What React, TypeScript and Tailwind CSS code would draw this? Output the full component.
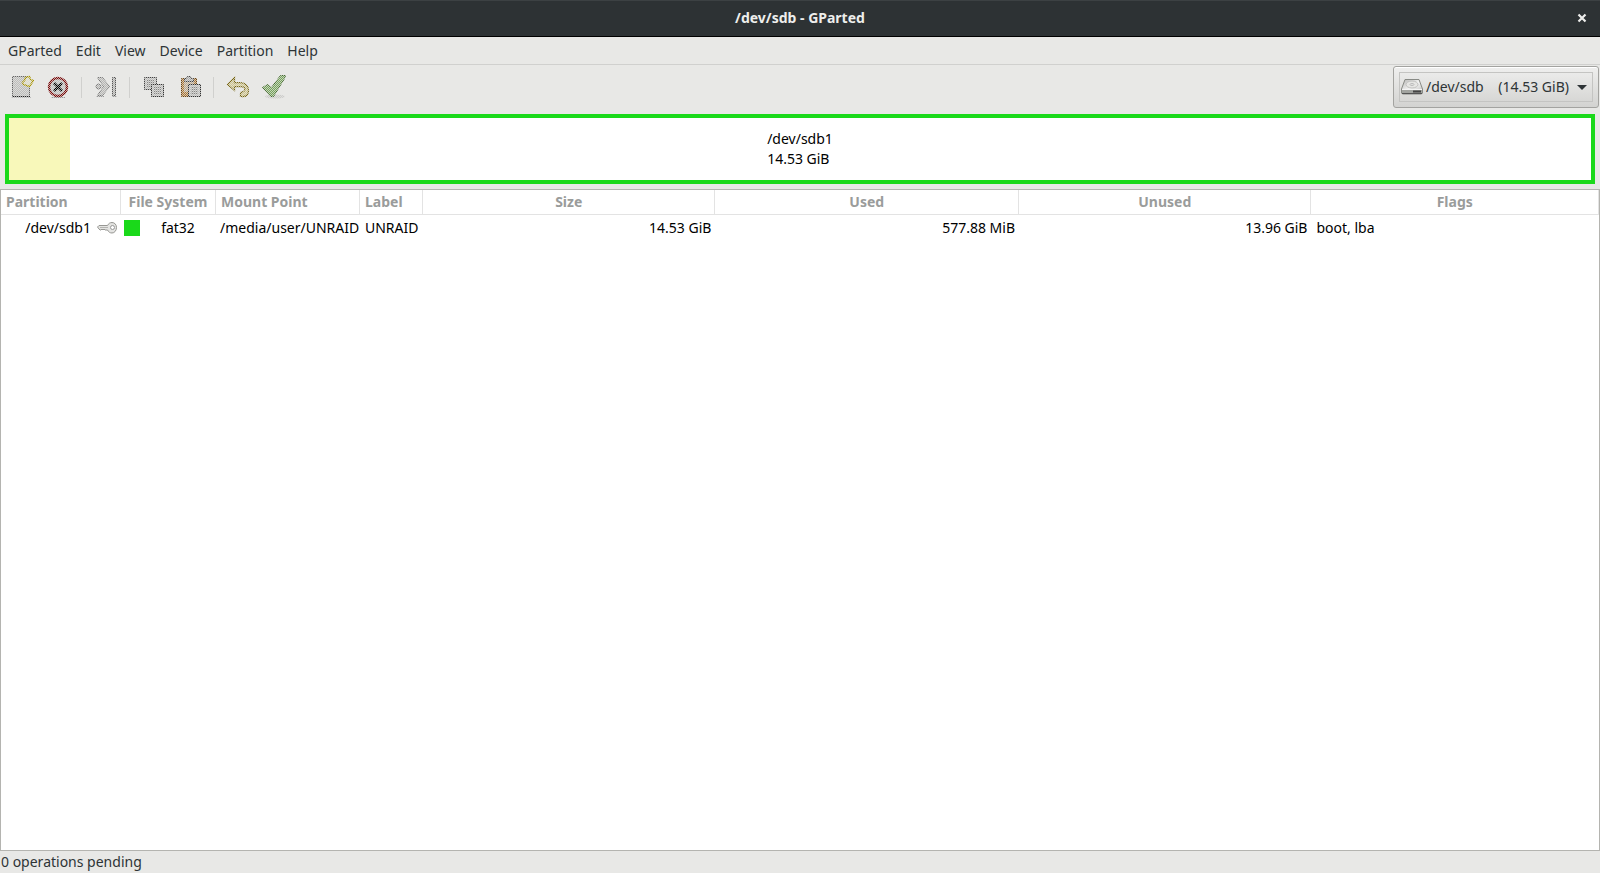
import type { ReactNode } from "react";

const menus = ["GParted", "Edit", "View", "Device", "Partition", "Help"];

const headClass = "h-[25px] border-r border-b border-[#e3e3e3] px-[5px] text-center font-bold whitespace-nowrap";

function StippledIcon({ children }: { children: ReactNode }) {
  return (
    <svg width="24" height="24" viewBox="0 0 24 24" fill="none" aria-hidden="true">
      <g mask="url(#stipple)">{children}</g>
    </svg>
  );
}

function StippleDefs() {
  return (
    <svg className="absolute" width="0" height="0" aria-hidden="true">
      <defs>
        <pattern id="checker" width="2" height="2" patternUnits="userSpaceOnUse">
          <path d="M0 0h2v2H0z" fill="#484848" />
          <path d="M0 0h1v1H0zM1 1h1v1H1z" fill="#fff" shapeRendering="crispEdges" />
        </pattern>
        <mask id="stipple" maskUnits="userSpaceOnUse" x="0" y="0" width="24" height="24">
          <rect width="24" height="24" fill="url(#checker)" />
        </mask>
      </defs>
    </svg>
  );
}

function ToolButton({ label, children }: { label: string; children: ReactNode }) {
  return (
    <button type="button" aria-label={label} className="flex h-9 w-9 items-center justify-center">
      <StippledIcon>{children}</StippledIcon>
    </button>
  );
}

function Separator() {
  return <div className="mr-1.5 ml-[5px] h-[21px] w-px bg-[#d0d0ce]" />;
}

function NewIcon() {
  return (
    <>
      <path d="M2.5 1.5h17v20h-17z" fill="#bcbcba" stroke="#666" />
      <path d="M2 21h18v1H2z" fill="#222" />
      <path d="M1 22.5h20" stroke="#bbb" />
      <path d="M15.5 2.5l4-1 1 3 3 1-2 3-2 3-3-1-3-1-1-2 2-2z" fill="#dedcc8" stroke="#a89400" strokeWidth="1.5" />
    </>
  );
}

function StopIcon() {
  return (
    <>
      <path d="M5 22.5h14" stroke="#999" />
      <circle cx="12" cy="12" r="9" fill="#c0c0be" stroke="#780808" strokeWidth="2.5" />
      <path d="M8 8l8 8M16 8l-8 8" stroke="#000" strokeWidth="2.8" />
    </>
  );
}

function ResizeIcon() {
  return (
    <>
      <circle cx="4.5" cy="11.5" r="2.5" fill="#b4b4b2" stroke="#777" />
      <path d="M3.5 2.5h5l7 9-7 9h-5l6-9z" fill="#b8b8b6" stroke="#777" />
      <path d="M18.5 2.5h3v18h-3z" fill="#b0b0ae" stroke="#555" />
      <path d="M2 21.5h8M18 21.5h5" stroke="#999" />
    </>
  );
}

function CopyIcon() {
  return (
    <>
      <path d="M2.5 2.5h12v12h-12z" fill="#bcbcba" stroke="#444" />
      <path d="M5 5.5h7M5 7.5h7M5 9.5h7M5 11.5h7" stroke="#858583" />
      <path d="M9.5 9.5h12v12h-12z" fill="#bcbcba" stroke="#333" />
      <path d="M12 12.5h7M12 14.5h7M12 16.5h7M12 18.5h7" stroke="#858583" />
    </>
  );
}

function PasteIcon() {
  return (
    <>
      <path d="M3.5 3.5h15v18h-15z" fill="#ab7634" stroke="#6e4410" />
      <path d="M6 5h10v12H6z" fill="#baa78c" />
      <path d="M6.5 6.5v-3h2l1-2h3l1 2h2v3z" fill="#aaa" stroke="#444" />
      <path d="M10.5 9.5h12v12h-12z" fill="#bcbcba" stroke="#333" />
      <path d="M13 12.5h7M13 14.5h7M13 16.5h7M13 18.5h7" stroke="#858583" />
    </>
  );
}

function UndoIcon() {
  return (
    <path
      d="M8.5 2.5l-7 7 7 6v-4h6c4 0 5 2 4 4-1 2-4 1-4 3v3c7 1 8-3 8-6 0-4-3-8-8-8h-6z"
      fill="#d0c68e"
      stroke="#7a6814"
      strokeWidth="1.25"
    />
  );
}

function ApplyIcon() {
  return (
    <>
      <ellipse cx="13" cy="21.5" rx="10" ry="2" fill="#ccccca" />
      <path d="M0.5 12.5l5-3 4 3 9-12h5l-1 3-11 18H9z" fill="#76a45a" stroke="#44692f" />
    </>
  );
}

function DriveIcon() {
  return (
    <svg width="22" height="18" viewBox="0 0 22 18" fill="none" aria-hidden="true">
      <defs>
        <linearGradient id="drive-top" x1="0" y1="0" x2="1" y2="1">
          <stop offset="0" stopColor="#b4b4b2" />
          <stop offset="0.5" stopColor="#f4f4f4" />
          <stop offset="1" stopColor="#b8b8b6" />
        </linearGradient>
      </defs>
      <path d="M4 1.5h14l3.5 9.5v4l-1 1h-19l-1-1v-4z" fill="url(#drive-top)" stroke="#888a85" />
      <ellipse cx="11" cy="6.5" rx="6" ry="3.5" fill="#e6e6e4" stroke="#c0c0be" />
      <ellipse cx="11" cy="6.5" rx="2" ry="1" stroke="#bbb" />
      <path d="M1 12h20v3H1z" fill="#a2a4a0" />
      <path d="M1 11.5h20" stroke="#f4f4f4" />
      <path d="M12 13.5h8" stroke="#444" strokeWidth="2" />
      <path d="M1 15.5h20" stroke="#555" />
    </svg>
  );
}

function KeyIcon() {
  return (
    <svg width="20" height="12" viewBox="0 0 20 12" fill="none" aria-hidden="true">
      <path
        d="M0.5 5l1.5-1.5h8.5c1-2 2.5-3 4.5-3 2.5 0 4.5 2 4.5 5s-2 5.5-4.5 5.5c-2 0-3.5-1-4.5-3H8l-1-1-1 1-1-1-1 1H3L2 7z"
        fill="#e4e4e2"
        stroke="#979793"
      />
      <path d="M3 5.5h8" stroke="#b5b5b2" />
      <circle cx="15.5" cy="5.5" r="2" fill="#fff" stroke="#999" />
    </svg>
  );
}

export default function App() {
  return (
    <div className="flex min-h-screen flex-col bg-[#e8e8e6] font-['Noto_Sans',sans-serif] text-sm text-[#2e3436]">
      <StippleDefs />
      <header className="flex h-[37px] items-center border-t border-b border-t-[#3c4143] border-b-black bg-[#2d3234] px-3 pb-0.5 font-bold text-[#eeeeec]">
        <div className="w-3" />
        <h1 className="flex-1 text-center">/dev/sdb - GParted</h1>
        <button type="button" aria-label="Close" className="flex w-3 justify-center">
          <svg width="10" height="10" viewBox="0 0 10 10" aria-hidden="true">
            <path d="M1.5 1.5l7 7M8.5 1.5l-7 7" stroke="#eeeeec" strokeWidth="2.2" />
          </svg>
        </button>
      </header>

      <nav className="flex h-7 items-center gap-3.5 border-b border-[#d0d0ce] px-2">
        {menus.map((menu) => (
          <button type="button" key={menu}>
            {menu}
          </button>
        ))}
      </nav>

      <div className="flex h-11 items-center pr-px pl-1">
        <ToolButton label="New"><NewIcon /></ToolButton>
        <ToolButton label="Delete"><StopIcon /></ToolButton>
        <Separator />
        <ToolButton label="Resize/Move"><ResizeIcon /></ToolButton>
        <Separator />
        <ToolButton label="Copy"><CopyIcon /></ToolButton>
        <ToolButton label="Paste"><PasteIcon /></ToolButton>
        <Separator />
        <ToolButton label="Undo"><UndoIcon /></ToolButton>
        <ToolButton label="Apply"><ApplyIcon /></ToolButton>
        <div className="relative ml-auto rounded-[3px] border border-[#a3a3a0] bg-linear-to-b from-[#efefee] to-[#d3d3d1] p-[5px] shadow-[inset_0_1px_#fff]">
          <select
            aria-label="Device"
            className="block h-[30px] w-[194px] appearance-none border border-[#c4c4c2] bg-transparent pl-[26px]"
          >
            <option>{"/dev/sdb\u00a0\u00a0\u00a0\u00a0(14.53 GiB)"}</option>
          </select>
          <span className="pointer-events-none absolute inset-y-0 left-[7px] flex items-center">
            <DriveIcon />
          </span>
          <span className="pointer-events-none absolute inset-y-0 right-[11px] flex items-center">
            <svg width="10" height="5" viewBox="0 0 10 5" aria-hidden="true">
              <path d="M0 0h10L5 5z" fill="#2e3436" />
            </svg>
          </span>
        </div>
      </div>

      <div className="mx-[5px] my-[5px] flex h-[70px] items-stretch border-4 border-[#1ad91a] bg-white text-black">
        <div className="grid flex-1 grid-cols-1">
          <div className="col-start-1 row-start-1 w-[61px] bg-[#f8f8ba]" />
          <div className="col-start-1 row-start-1 place-self-center leading-5">
            <div>/dev/sdb1</div>
            <div>14.53 GiB</div>
          </div>
        </div>
      </div>

      <main className="flex-1 border border-[#b4b4b0] bg-white">
        <table className="w-full table-fixed border-separate border-spacing-0">
          <colgroup>
            <col className="w-[120px]" />
            <col className="w-[95px]" />
            <col className="w-[144px]" />
            <col className="w-[63px]" />
            <col className="w-[18.3%]" />
            <col className="w-[19%]" />
            <col className="w-[18.3%]" />
            <col />
          </colgroup>
          <thead className="text-[#9a9c9b]">
            <tr>
              <th className={`${headClass} text-left`}>Partition</th>
              <th className={headClass}>File System</th>
              <th className={`${headClass} text-left`}>Mount Point</th>
              <th className={`${headClass} text-left`}>Label</th>
              <th className={headClass}>Size</th>
              <th className={headClass}>Used</th>
              <th className={headClass}>Unused</th>
              <th className={headClass}>Flags</th>
            </tr>
          </thead>
          <tbody className="text-black">
            <tr className="h-[26px] whitespace-nowrap">
              <td>
                <div className="flex items-center justify-end gap-1.5 pr-1">
                  /dev/sdb1
                  <KeyIcon />
                </div>
              </td>
              <td>
                <div className="flex items-center pl-[3px]">
                  <span className="h-4 w-4 bg-[#1ad91a]" />
                  <span className="flex-1 text-center">fat32</span>
                </div>
              </td>
              <td className="pl-1">/media/user/UNRAID</td>
              <td className="pl-[5px]">UNRAID</td>
              <td className="pr-1 text-right">14.53 GiB</td>
              <td className="pr-1 text-right">577.88 MiB</td>
              <td className="pr-1 text-right">13.96 GiB</td>
              <td className="pl-[5px]">boot, lba</td>
            </tr>
          </tbody>
        </table>
      </main>

      <footer className="flex h-[22px] items-center px-px">0 operations pending</footer>
    </div>
  );
}
